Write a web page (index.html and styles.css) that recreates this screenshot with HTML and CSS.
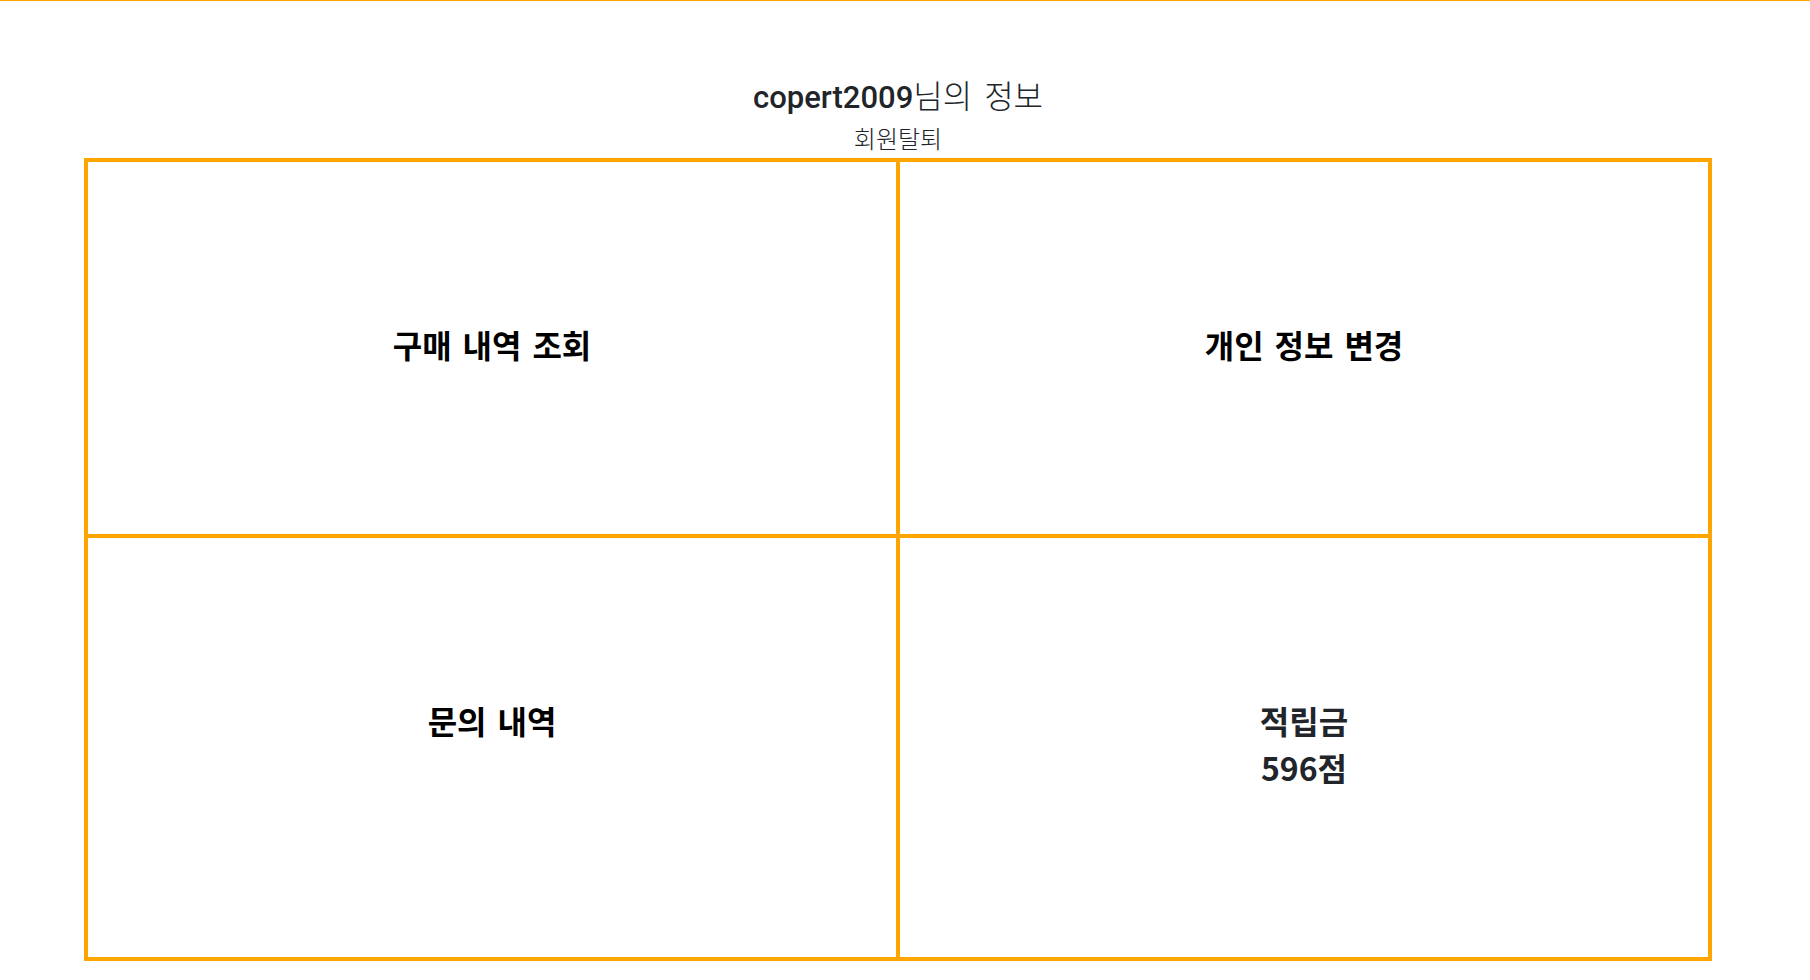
FILE: index.html
```html
<!DOCTYPE html>
<html lang="ko">
<head>
<meta charset="utf-8">
<title>내 정보</title>
<link rel="stylesheet" href="styles.css">
</head>
<body>
<div class="top-bar"></div>
<main class="page">
  <header class="profile-head">
    <h2 class="profile-title"><span class="user-id">copert2009</span><span class="title-rest">님의 정보</span></h2>
    <a class="withdraw" href="#">회원탈퇴</a>
  </header>
  <section class="menu-grid">
    <a class="menu-cell menu-link" href="#">구매 내역 조회</a>
    <a class="menu-cell menu-link" href="#">개인 정보 변경</a>
    <a class="menu-cell menu-link" href="#">문의 내역</a>
    <div class="menu-cell points">
      <div>적립금</div>
      <div>596점</div>
    </div>
  </section>
</main>
</body>
</html>
```
FILE: styles.css
```css
html, body {
  margin: 0;
  padding: 0;
  background: #ffffff;
}

body {
  font-family: Roboto, "Noto Sans CJK KR", sans-serif;
  color: #212529;
}

.top-bar {
  height: 1px;
  background: #ffa500;
}

.page {
  margin: 0 98px 0 84px;
}

.profile-head {
  display: flex;
  flex-direction: column;
  align-items: center;
  padding-top: 75px;
}

.profile-title {
  margin: 0;
  font-size: 31px;
  line-height: 36px;
  font-weight: 500;
}

.user-id {
  font-family: Roboto, sans-serif;
  font-weight: 500;
}

.title-rest {
  font-family: "Noto Sans CJK KR", sans-serif;
  font-size: 32px;
  font-weight: 300;
  word-spacing: 3px;
}

.withdraw {
  margin-top: 7px;
  font-family: "Noto Sans CJK KR", sans-serif;
  font-size: 24px;
  font-weight: 300;
  line-height: 30px;
  color: #212529;
  text-decoration: none;
}

.menu-grid {
  display: grid;
  grid-template-columns: 1fr 1fr;
  border: 2px solid #ffa500;
  margin-top: 5px;
}

.menu-cell {
  border: 2px solid #ffa500;
  padding: 159px 0 166px;
  text-align: center;
  font-family: "Noto Sans CJK KR", sans-serif;
  font-size: 32px;
  font-weight: 700;
  line-height: 47px;
  word-spacing: 2px;
}

.menu-link {
  color: #000000;
  text-decoration: none;
}

.points {
  color: #212529;
}
```
